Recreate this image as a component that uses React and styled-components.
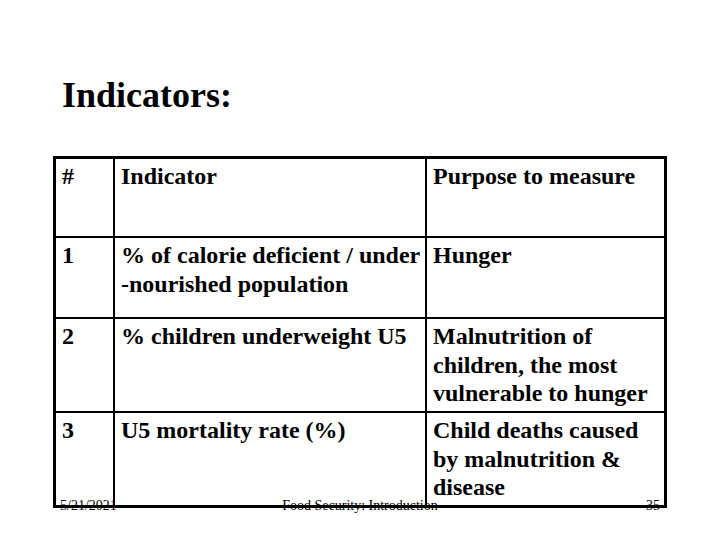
import React from 'react';
import styled, { createGlobalStyle } from 'styled-components';

const GlobalStyle = createGlobalStyle`
  html, body {
    margin: 0;
    padding: 0;
    background: #ffffff;
  }
  body {
    font-family: "Liberation Serif", "Times New Roman", serif;
    color: #000;
  }
`;

const Slide = styled.div`
  position: relative;
  width: 720px;
  height: 540px;
  box-sizing: border-box;
  padding: 75px 0 0 53px;
  overflow: hidden;
  background: #fff;
`;

const Title = styled.h1`
  margin: 0 0 41px 9px;
  font-size: 36px;
  line-height: 40px;
  font-weight: bold;
`;

const Grid = styled.div`
  display: grid;
  grid-template-columns: 59px 312px 237px;
  width: 614px;
  box-sizing: border-box;
  border: 3px solid #000;
`;

const Cell = styled.div`
  box-sizing: border-box;
  height: ${(p) => p.$h}px;
  padding: 3px 2px 0 6px;
  font-size: 24px;
  line-height: 28.5px;
  font-weight: bold;
  border-right: ${(p) => (p.$last ? 'none' : '2px solid #000')};
  border-bottom: ${(p) => (p.$bottom ? 'none' : '2px solid #000')};
`;

const Footer = styled.div`
  position: absolute;
  left: 60px;
  top: 498px;
  width: 600px;
  display: grid;
  grid-template-columns: 1fr auto 1fr;
  font-size: 14px;
  line-height: 16px;
`;

const FootRight = styled.span`
  justify-self: end;
`;

const rows = [
  { h: 79, n: '#', ind: 'Indicator', purpose: 'Purpose to measure' },
  {
    h: 81,
    n: '1',
    ind: ['% of calorie deficient / under', '-nourished population'],
    purpose: 'Hunger',
  },
  {
    h: 94,
    n: '2',
    ind: '% children underweight U5',
    purpose: ['Malnutrition of', 'children, the most', 'vulnerable to hunger'],
  },
  {
    h: 92,
    n: '3',
    ind: 'U5 mortality rate (%)',
    purpose: ['Child deaths caused', 'by malnutrition &', 'disease'],
  },
];

const lines = (v) =>
  Array.isArray(v)
    ? v.map((l, i) => (
        <React.Fragment key={i}>
          {i > 0 && <br />}
          {l}
        </React.Fragment>
      ))
    : v;

export default function App() {
  return (
    <>
      <GlobalStyle />
      <Slide>
        <Title>Indicators:</Title>
        <Grid>
          {rows.map((r, i) => {
            const bottom = i === rows.length - 1;
            return (
              <React.Fragment key={i}>
                <Cell $h={r.h} $bottom={bottom}>{r.n}</Cell>
                <Cell $h={r.h} $bottom={bottom}>{lines(r.ind)}</Cell>
                <Cell $h={r.h} $bottom={bottom} $last>{lines(r.purpose)}</Cell>
              </React.Fragment>
            );
          })}
        </Grid>
        <Footer>
          <span>5/21/2021</span>
          <span>Food Security: Introduction</span>
          <FootRight>35</FootRight>
        </Footer>
      </Slide>
    </>
  );
}
